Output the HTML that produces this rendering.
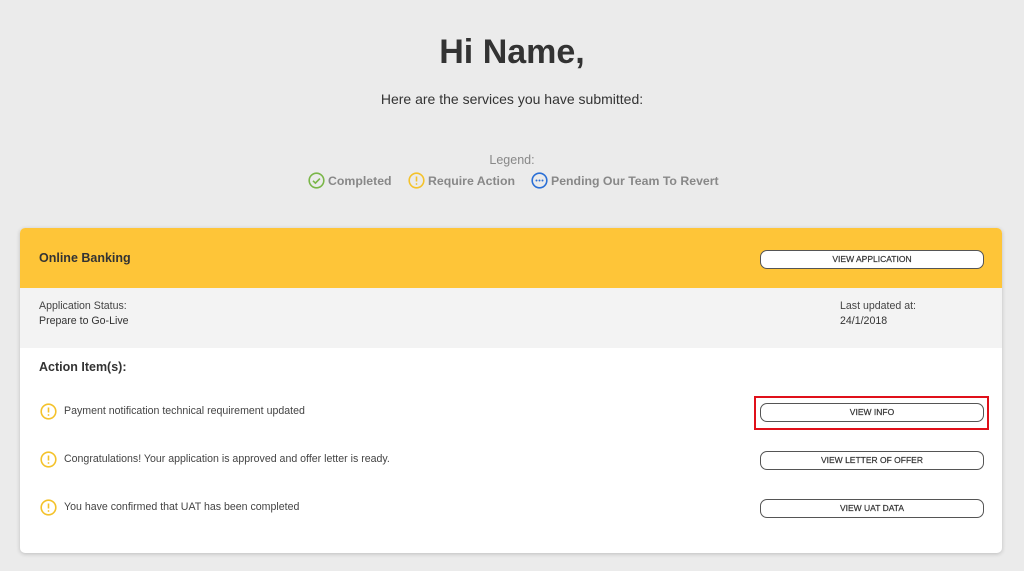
<!DOCTYPE html>
<html><head><meta charset="utf-8"><style>
*{margin:0;padding:0;box-sizing:border-box}
body{width:1024px;height:571px;background:#ebebeb;font-family:"Liberation Sans",sans-serif;color:#333;position:relative;overflow:hidden}
.a{position:absolute}
h1{position:absolute;top:33px;left:0;width:1024px;text-align:center;font-size:34px;font-weight:bold;color:#333}
.sub{top:91px;left:0;width:1024px;text-align:center;font-size:14px;color:#333}
.lg{top:153px;left:0;width:1024px;text-align:center;font-size:12.5px;color:#888}
.leg{top:172px;font-size:12.3px;color:#888;font-weight:bold;display:flex;align-items:center}
.card{left:20px;top:228px;width:982px;height:325px;background:#fff;border-radius:5px;box-shadow:0 1px 4px rgba(0,0,0,.2);overflow:hidden}
.hd{position:absolute;left:0;top:0;width:982px;height:60px;background:#fec538}
.st{position:absolute;left:0;top:60px;width:982px;height:60px;background:#f3f3f3}
.btn{position:absolute;left:740px;width:224px;height:19px;border:1px solid #555;border-radius:7px;background:#fff;font-size:8.5px;text-align:center;line-height:17px;color:#333;-webkit-text-stroke:.2px #333}
.t{font-size:10.6px;color:#444}
.ic{position:absolute;left:20px}
</style></head><body>
<h1>Hi Name,</h1>
<div class="a sub">Here are the services you have submitted:</div>
<div class="a lg">Legend:</div>
<div class="a leg" style="left:308px"><svg width="17" height="17" viewBox="0 0 17 17"><circle cx="8.5" cy="8.5" r="7.3" fill="none" stroke="#7ab648" stroke-width="1.6"/><path d="M5 8.8l2.4 2.3 4.5-4.5" fill="none" stroke="#7ab648" stroke-width="1.6"/></svg><span style="margin-left:3px">Completed</span></div>
<div class="a leg" style="left:408px"><svg width="17" height="17" viewBox="0 0 17 17"><circle cx="8.5" cy="8.5" r="7.3" fill="none" stroke="#f4c22b" stroke-width="1.6"/><path d="M8.5 4.5v5" stroke="#f4c22b" stroke-width="1.6"/><circle cx="8.5" cy="12" r=".9" fill="#f4c22b"/></svg><span style="margin-left:3px">Require Action</span></div>
<div class="a leg" style="left:531px"><svg width="17" height="17" viewBox="0 0 17 17"><circle cx="8.5" cy="8.5" r="7.3" fill="none" stroke="#2a6fd6" stroke-width="1.6"/><circle cx="5.5" cy="8.5" r="1" fill="#2a6fd6"/><circle cx="8.5" cy="8.5" r="1" fill="#2a6fd6"/><circle cx="11.5" cy="8.5" r="1" fill="#2a6fd6"/></svg><span style="margin-left:3px">Pending Our Team To Revert</span></div>
<div class="a card">
<div class="hd"><div class="a" style="left:19px;top:23px;font-size:12.5px;font-weight:bold;color:#333">Online Banking</div><div class="btn" style="top:22px">VIEW APPLICATION</div></div>
<div class="st"><div class="a t" style="left:19px;top:12px">Application Status:</div><div class="a t" style="left:19px;top:27px;color:#333">Prepare to Go-Live</div>
<div class="a t" style="left:820px;top:12px">Last updated at:</div><div class="a t" style="left:820px;top:27px;color:#333">24/1/2018</div></div>
<div class="a" style="left:19px;top:132px;font-size:12.5px;font-weight:bold;color:#333">Action Item(s):</div>
<svg class="ic" style="top:175px" width="17" height="17" viewBox="0 0 17 17"><circle cx="8.5" cy="8.5" r="7.3" fill="none" stroke="#f4c22b" stroke-width="1.6"/><path d="M8.5 4.5v5" stroke="#f4c22b" stroke-width="1.6"/><circle cx="8.5" cy="12" r=".9" fill="#f4c22b"/></svg>
<div class="a t" style="left:44px;top:177px">Payment notification technical requirement updated</div>
<div class="a" style="left:734px;top:168px;width:235px;height:34px;border:2px solid #e0101a"></div>
<div class="btn" style="top:175px">VIEW INFO</div>
<svg class="ic" style="top:223px" width="17" height="17" viewBox="0 0 17 17"><circle cx="8.5" cy="8.5" r="7.3" fill="none" stroke="#f4c22b" stroke-width="1.6"/><path d="M8.5 4.5v5" stroke="#f4c22b" stroke-width="1.6"/><circle cx="8.5" cy="12" r=".9" fill="#f4c22b"/></svg>
<div class="a t" style="left:44px;top:225px">Congratulations! Your application is approved and offer letter is ready.</div>
<div class="btn" style="top:223px">VIEW LETTER OF OFFER</div>
<svg class="ic" style="top:271px" width="17" height="17" viewBox="0 0 17 17"><circle cx="8.5" cy="8.5" r="7.3" fill="none" stroke="#f4c22b" stroke-width="1.6"/><path d="M8.5 4.5v5" stroke="#f4c22b" stroke-width="1.6"/><circle cx="8.5" cy="12" r=".9" fill="#f4c22b"/></svg>
<div class="a t" style="left:44px;top:273px">You have confirmed that UAT has been completed</div>
<div class="btn" style="top:271px">VIEW UAT DATA</div>
</div>
</body></html>
